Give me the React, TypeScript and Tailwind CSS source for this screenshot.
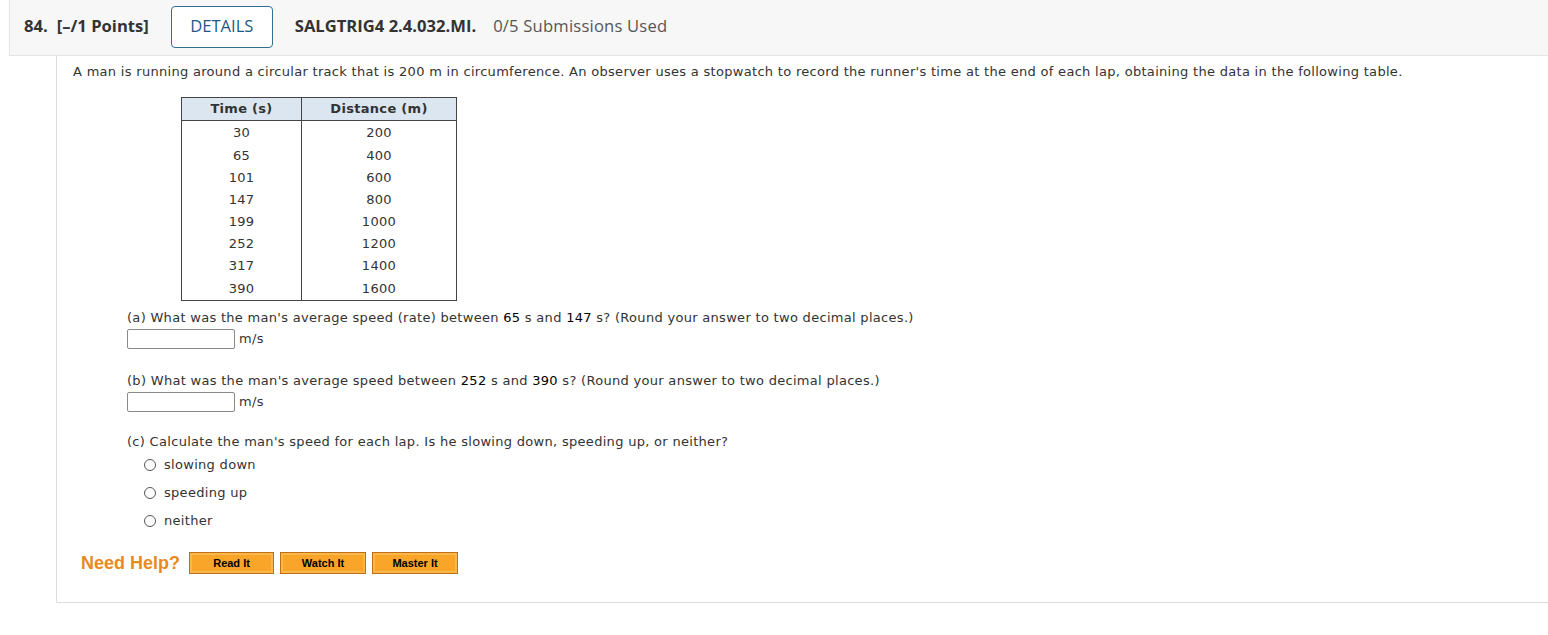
import React from "react";

const rows: [string, string][] = [
  ["30", "200"],
  ["65", "400"],
  ["101", "600"],
  ["147", "800"],
  ["199", "1000"],
  ["252", "1200"],
  ["317", "1400"],
  ["390", "1600"],
];

function Radio({ label }: { label: string }) {
  return (
    <div className="flex items-center h-[28px]">
      <span className="ml-[17px] w-[12px] h-[12px] rounded-full border border-[#555] bg-white" />
      <span className="ml-[8px]">{label}</span>
    </div>
  );
}

function HelpBtn({ label, w }: { label: string; w: string }) {
  return (
    <div
      className={`${w} h-[22px] flex items-center justify-center border border-[#c06d1a] bg-[#f9a52a] shadow-[inset_0_0_0_2px_#fbb84a] text-[11px] font-bold text-black tracking-normal`}
      style={{ fontFamily: '"Liberation Sans", Arial, sans-serif' }}
    >
      {label}
    </div>
  );
}

export default function App() {
  return (
    <div className="w-[1548px] h-[635px] bg-white overflow-hidden">
      <div
        className="ml-[9px] h-[56px] bg-[#f7f7f7] border-l border-b border-[#e4e4e4] flex items-center pl-[14px] pb-[2px] text-[16.6px]"
        style={{ fontFamily: '"Open Sans", sans-serif' }}
      >
        <span className="font-bold text-[#333]">84.</span>
        <span className="font-bold text-[#333] ml-[9px]">[–/1 Points]</span>
        <div className="ml-[22px] w-[102px] h-[42px] rounded-[4px] border border-[#2f6f94] bg-white flex items-center justify-center text-[#1c5a84]">
          DETAILS
        </div>
        <span className="font-bold text-[#333] ml-[22px]">SALGTRIG4 2.4.032.MI.</span>
        <span className="text-[#555] ml-[17px] tracking-[0.2px]">0/5 Submissions Used</span>
      </div>
      <div
        className="ml-[56px] h-[547px] border-l border-b border-[#dcdcdc] pl-[16px] pt-[8px] text-[13px] leading-[16px] tracking-[0.3px] text-[#333]"
        style={{ fontFamily: '"DejaVu Sans", Verdana, sans-serif' }}
      >
        <div className="h-[16px]">
          A man is running around a circular track that is 200 m in circumference. An observer uses a stopwatch to record the runner's time at the end of each lap, obtaining the data in the following table.
        </div>
        <table className="ml-[108px] mt-[17px] border-collapse border border-[#444]">
          <thead>
            <tr className="bg-[#dce6f1] h-[23px]">
              <th className="w-[120px] border border-[#444] font-bold text-[#333] p-0">Time (s)</th>
              <th className="w-[155px] border border-[#444] font-bold text-[#333] p-0">Distance (m)</th>
            </tr>
          </thead>
          <tbody>
            {rows.map(([t, d], i) => (
              <tr key={t} className={i === 0 ? "h-[24px]" : i > 5 ? "h-[23px]" : "h-[22px]"}>
                <td className="text-center border-r border-[#444] p-0">{t}</td>
                <td className="text-center p-0">{d}</td>
              </tr>
            ))}
          </tbody>
        </table>
        <div className="ml-[54px]">
          <div className="mt-[9px] h-[16px]">
            (a) What was the man's average speed (rate) between <span className="text-black">65</span> s and <span className="text-black">147</span> s? (Round your answer to two decimal places.)
          </div>
          <div className="flex items-center mt-[3px] h-[20px]">
            <div className="w-[108px] h-[20px] border border-[#8a8a8a] rounded-[2px] bg-white" />
            <span className="ml-[4px]">m/s</span>
          </div>
          <div className="mt-[24px] h-[16px]">
            (b) What was the man's average speed between <span className="text-black">252</span> s and <span className="text-black">390</span> s? (Round your answer to two decimal places.)
          </div>
          <div className="flex items-center mt-[3px] h-[20px]">
            <div className="w-[108px] h-[20px] border border-[#8a8a8a] rounded-[2px] bg-white" />
            <span className="ml-[4px]">m/s</span>
          </div>
          <div className="mt-[22px] h-[16px]">
            (c) Calculate the man's speed for each lap. Is he slowing down, speeding up, or neither?
          </div>
          <div className="mt-[1px]">
            <Radio label="slowing down" />
            <Radio label="speeding up" />
            <Radio label="neither" />
          </div>
        </div>
        <div className="flex items-center mt-[17px] ml-[8px]">
          <span
            className="text-[18px] font-bold text-[#e98a1f] tracking-normal"
            style={{ fontFamily: '"Liberation Sans", Arial, sans-serif' }}
          >
            Need Help?
          </span>
          <div className="ml-[9px] flex gap-[6px]">
            <HelpBtn label="Read It" w="w-[85px]" />
            <HelpBtn label="Watch It" w="w-[86px]" />
            <HelpBtn label="Master It" w="w-[86px]" />
          </div>
        </div>
      </div>
    </div>
  );
}
